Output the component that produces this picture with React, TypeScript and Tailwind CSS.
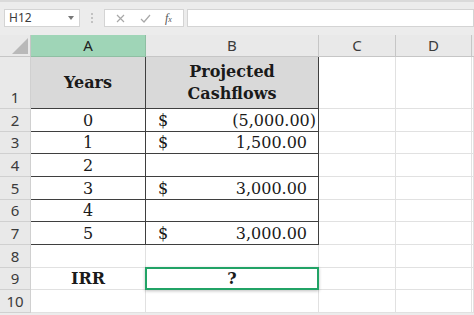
const years = ["0", "1", "2", "3", "4", "5"];
const cash: ({ v: string; neg?: boolean } | null)[] = [
  { v: "(5,000.00)", neg: true },
  { v: "1,500.00" },
  null,
  { v: "3,000.00" },
  null,
  { v: "3,000.00" },
];

const serif = "font-['DejaVu_Serif','Liberation_Serif',serif] text-[#1a1a1a]";
const ui = "font-['Noto_Sans','Open_Sans',sans-serif] text-[#3b3b3b]";

function RowHead({ n }: { n: number }) {
  return (
    <div
      className={`flex items-end justify-center border-r border-b border-[#d0d0d0] bg-[#e9e9e9] pb-[1px] text-[15px] leading-[19px] ${ui}`}
    >
      {n}
    </div>
  );
}

function Blank({ dark = false }: { dark?: boolean }) {
  return (
    <div
      className={`border-r border-b ${dark ? "border-[#3f3f3f]" : "border-[#e1e1e1]"}`}
    />
  );
}

export default function App() {
  return (
    <div className="h-[315px] w-[474px] overflow-hidden bg-white">
      {/* formula bar */}
      <div className="flex h-[35px] items-start border-t-2 border-[#dadada] bg-[#ececec] pt-[7px] pl-[4px]">
        <div className="flex h-[18px] w-[76px] items-center justify-between border border-[#d4d4d4] bg-white pl-[4px] pr-[5px]">
          <span className={`text-[12px] leading-none ${ui}`}>H12</span>
          <svg width="6" height="4" viewBox="0 0 6 4">
            <path d="M0 0h6L3 4z" fill="#777" />
          </svg>
        </div>
        <div className="flex h-[18px] w-[24px] flex-col items-center justify-center gap-[2px]">
          <span className="h-[2px] w-[2px] rounded-full bg-[#b5b5b5]" />
          <span className="h-[2px] w-[2px] rounded-full bg-[#b5b5b5]" />
          <span className="h-[2px] w-[2px] rounded-full bg-[#b5b5b5]" />
        </div>
        <div className="flex h-[18px] w-[80px] items-center justify-around border border-[#d4d4d4] bg-white px-[4px]">
          <svg width="9" height="9" viewBox="0 0 9 9" stroke="#a8a8a8" strokeWidth="1.2">
            <path d="M1 1l7 7M8 1l-7 7" />
          </svg>
          <svg width="11" height="9" viewBox="0 0 11 9" fill="none" stroke="#a8a8a8" strokeWidth="1.2">
            <path d="M1 5l3 3 6-7" />
          </svg>
          <span className="font-['Liberation_Serif',serif] text-[12px] italic leading-none text-[#555]">
            f<span className="text-[8px]">x</span>
          </span>
        </div>
        <div className="ml-[3px] h-[18px] flex-1 border border-[#d4d4d4] bg-white" />
      </div>

      {/* sheet */}
      <div className="grid grid-cols-[31px_115px_173px_77px_76px_1fr] grid-rows-[22px_52px_23px_22px_23px_23px_22px_23px_23px_22px_23px_10px]">
        {/* column headers */}
        <div className="relative border-r border-b border-[#c6c6c6] bg-[#e9e9e9]">
          <svg className="absolute right-[2px] bottom-[2px]" width="16" height="16" viewBox="0 0 16 16">
            <path d="M16 0V16H0z" fill="#b9b9b9" />
          </svg>
        </div>
        <div className={`flex items-center justify-center border-r border-b border-[#8fbfa3] bg-[#9fd5b7] text-[15px] text-[#222] ${ui}`}>
          A
        </div>
        {["B", "C", "D"].map((c) => (
          <div
            key={c}
            className={`flex items-center justify-center border-r border-b border-[#c6c6c6] bg-[#e9e9e9] text-[15px] ${ui}`}
          >
            {c}
          </div>
        ))}
        <div className="border-b border-[#c6c6c6] bg-[#e9e9e9]" />

        {/* row 1 */}
        <RowHead n={1} />
        <div className={`flex items-center justify-center border-r border-b border-[#3f3f3f] bg-[#d9d9d9] text-[16px] font-bold ${serif}`}>
          Years
        </div>
        <div className={`flex flex-col items-center justify-center border-r border-b border-[#3f3f3f] bg-[#d9d9d9] text-[16px] leading-[22px] font-bold ${serif}`}>
          <span>Projected</span>
          <span>Cashflows</span>
        </div>
        <Blank />
        <Blank />
        <Blank />

        {/* rows 2-7 */}
        {years.map((y, i) => (
          <div key={y} className="contents">
            <RowHead n={i + 2} />
            <div className={`flex items-end justify-center border-r border-b border-[#3f3f3f] pb-[1px] text-[16px] leading-[19px] ${serif}`}>
              {y}
            </div>
            <div className={`flex items-end justify-between border-r border-b border-[#3f3f3f] pb-[1px] pl-[12px] text-[16px] leading-[19px] ${serif}`}>
              {cash[i] && (
                <>
                  <span>$</span>
                  <span className={cash[i]!.neg ? "pr-[2px]" : "pr-[11px]"}>{cash[i]!.v}</span>
                </>
              )}
            </div>
            <Blank />
            <Blank />
            <Blank />
          </div>
        ))}

        {/* row 8 */}
        <RowHead n={8} />
        <Blank />
        <Blank />
        <Blank />
        <Blank />
        <Blank />

        {/* row 9 */}
        <RowHead n={9} />
        <div className={`flex items-end justify-center border-r border-b border-[#e1e1e1] pb-[1px] text-[16px] leading-[19px] font-bold ${serif}`}>
          IRR
        </div>
        <div className={`relative flex items-end justify-center border-r border-b border-[#e1e1e1] pb-[1px] text-[16px] leading-[19px] font-bold ${serif}`}>
          ?
          <div className="absolute -top-[1px] -left-[1px] -right-[1px] -bottom-[1px] border-2 border-[#21a366] shadow-[0_1px_3px_rgba(0,0,0,0.25)]" />
        </div>
        <Blank />
        <Blank />
        <Blank />

        {/* row 10 */}
        <RowHead n={10} />
        <Blank />
        <Blank />
        <Blank />
        <Blank />
        <Blank />

        <div className="col-span-6 bg-[#ececec]" />
      </div>
    </div>
  );
}
